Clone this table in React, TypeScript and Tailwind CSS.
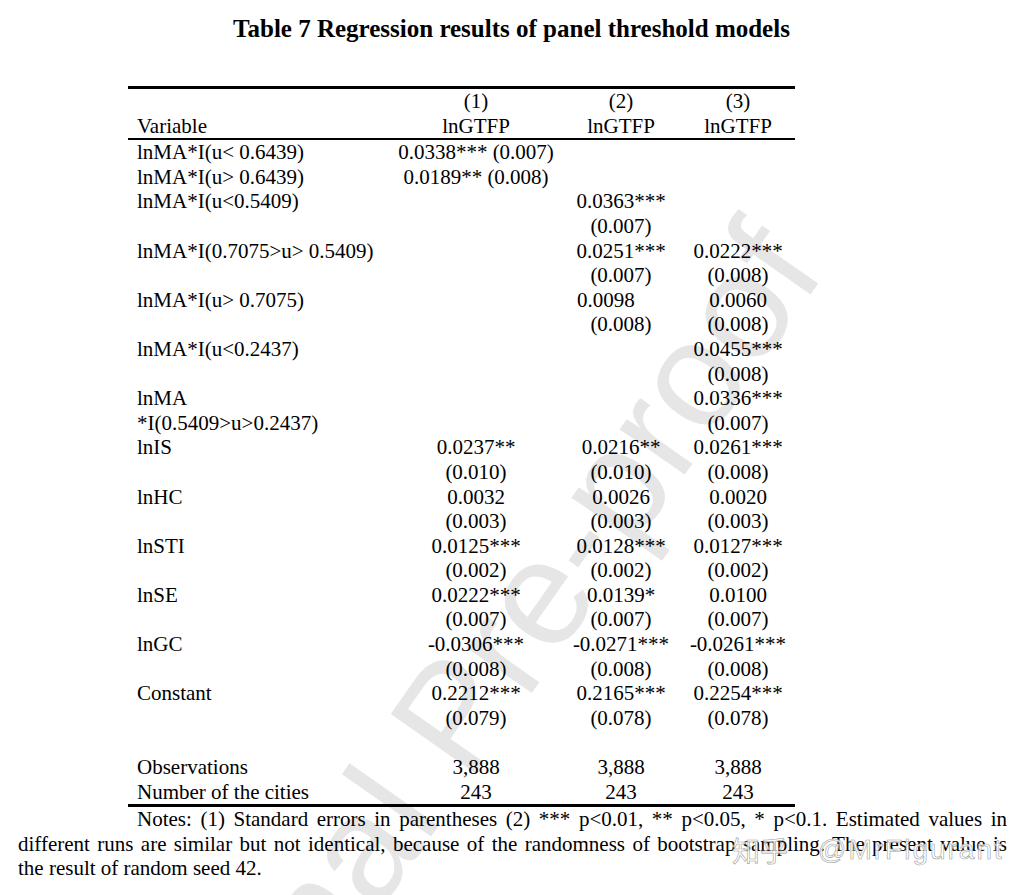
import React from "react";

type Row = { v?: string; c1?: string; c2?: string; c3?: string; c2left?: boolean };

const rows: Row[] = [
  { v: "lnMA*I(u< 0.6439)", c1: "0.0338*** (0.007)" },
  { v: "lnMA*I(u> 0.6439)", c1: "0.0189** (0.008)" },
  { v: "lnMA*I(u<0.5409)", c2: "0.0363***" },
  { c2: "(0.007)" },
  { v: "lnMA*I(0.7075>u> 0.5409)", c2: "0.0251***", c3: "0.0222***" },
  { c2: "(0.007)", c3: "(0.008)" },
  { v: "lnMA*I(u> 0.7075)", c2: "0.0098", c3: "0.0060", c2left: true },
  { c2: "(0.008)", c3: "(0.008)" },
  { v: "lnMA*I(u<0.2437)", c3: "0.0455***" },
  { c3: "(0.008)" },
  { v: "lnMA", c3: "0.0336***" },
  { v: "*I(0.5409>u>0.2437)", c3: "(0.007)" },
  { v: "lnIS", c1: "0.0237**", c2: "0.0216**", c3: "0.0261***" },
  { c1: "(0.010)", c2: "(0.010)", c3: "(0.008)" },
  { v: "lnHC", c1: "0.0032", c2: "0.0026", c3: "0.0020" },
  { c1: "(0.003)", c2: "(0.003)", c3: "(0.003)" },
  { v: "lnSTI", c1: "0.0125***", c2: "0.0128***", c3: "0.0127***" },
  { c1: "(0.002)", c2: "(0.002)", c3: "(0.002)" },
  { v: "lnSE", c1: "0.0222***", c2: "0.0139*", c3: "0.0100" },
  { c1: "(0.007)", c2: "(0.007)", c3: "(0.007)" },
  { v: "lnGC", c1: "-0.0306***", c2: "-0.0271***", c3: "-0.0261***" },
  { c1: "(0.008)", c2: "(0.008)", c3: "(0.008)" },
  { v: "Constant", c1: "0.2212***", c2: "0.2165***", c3: "0.2254***" },
  { c1: "(0.079)", c2: "(0.078)", c3: "(0.078)" },
  {},
  { v: "Observations", c1: "3,888", c2: "3,888", c3: "3,888" },
  { v: "Number of the cities", c1: "243", c2: "243", c3: "243" },
];

export default function App() {
  return (
    <div
      className="relative w-[1023px] h-[895px] overflow-hidden bg-white text-black"
      style={{ fontFamily: '"Liberation Serif", "Times New Roman", serif' }}
    >
      {/* diagonal watermark */}
      <div
        className="absolute left-[452px] top-[716px] -translate-x-1/2 -translate-y-1/2 -rotate-[55deg] whitespace-nowrap text-[150px] leading-none text-[#e6e6e6] select-none"
        style={{ fontFamily: '"Liberation Sans", Arial, sans-serif' }}
      >
        Journal Pre-proof
      </div>

      <div className="relative">
        <h1 className="mt-[14px] text-center text-[25px] font-bold leading-[30px]">
          Table 7 Regression results of panel threshold models
        </h1>

        <div className="ml-[128px] mt-[42px] w-[667px] text-[21px] leading-[24.6px]">
          <div className="h-[3px] bg-black" />
          <div className="grid grid-cols-[252px_192px_98px_125px]">
            <div className="pl-[9px] flex items-end">Variable</div>
            <div className="text-center">
              <div>(1)</div>
              <div>lnGTFP</div>
            </div>
            <div className="text-center">
              <div>(2)</div>
              <div>lnGTFP</div>
            </div>
            <div className="text-center pl-[11px]">
              <div>(3)</div>
              <div>lnGTFP</div>
            </div>
          </div>
          <div className="h-[2px] bg-black" />
          <div className="grid grid-cols-[252px_192px_98px_125px]">
            {rows.map((r, i) => (
              <React.Fragment key={i}>
                <div className="pl-[9px] h-[24.6px] whitespace-nowrap">{r.v ?? ""}</div>
                <div className="h-[24.6px] flex justify-center whitespace-nowrap">{r.c1 ?? ""}</div>
                <div
                  className={
                    r.c2left
                      ? "h-[24.6px] pl-[5px] whitespace-nowrap"
                      : "h-[24.6px] flex justify-center whitespace-nowrap"
                  }
                >
                  {r.c2 ?? ""}
                </div>
                <div className="h-[24.6px] pl-[11px] flex justify-center whitespace-nowrap">{r.c3 ?? ""}</div>
              </React.Fragment>
            ))}
          </div>
          <div className="h-[3px] bg-black" />
        </div>

        <div className="ml-[18px] w-[989px] text-[21px] leading-[24.6px]">
          <div className="pl-[119px] text-justify [text-align-last:justify]">
            Notes: (1) Standard errors in parentheses (2) *** p&lt;0.01, ** p&lt;0.05, * p&lt;0.1. Estimated values in
          </div>
          <div className="text-justify [text-align-last:justify]">
            different runs are similar but not identical, because of the randomness of bootstrap sampling. The present value is
          </div>
          <div>the result of random seed 42.</div>
        </div>
      </div>

      {/* zhihu watermark */}
      <div
        className="absolute left-[732px] top-[834px] flex items-center whitespace-nowrap text-[28px] leading-[32px] text-white/80 [-webkit-text-stroke:0.6px_#a0a0a0]"
        style={{ fontFamily: '"Noto Sans CJK SC", "Liberation Sans", sans-serif' }}
      >
        <span className="w-[86px]">知乎</span>
        <span className="tracking-[2px]" style={{ fontFamily: '"Liberation Sans", Arial, sans-serif' }}>
          @MrFigurant
        </span>
      </div>
    </div>
  );
}
